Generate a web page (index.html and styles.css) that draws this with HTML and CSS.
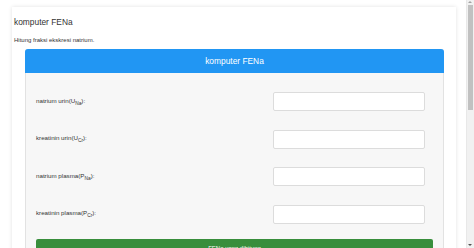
FILE: index.html
```html
<!DOCTYPE html>
<html lang="id">
<head>
    <meta charset="UTF-8">
    <meta name="viewport" content="width=device-width, initial-scale=1.0">
    <title>komputer FENa</title>
    <link rel="stylesheet" href="styles.css">
</head>
<body>
    <div class="container">
        <h1 class="page-title">komputer FENa</h1>
        <p class="intro">Hitung fraksi ekskresi natrium.</p>

        <div class="calc">
            <div class="calc-head">komputer FENa</div>
            <form class="calc-body" id="fenaForm">
                <div class="row">
                    <label for="una">natrium urin(U<sub>Na</sub>):</label>
                    <input type="number" id="una" name="una">
                </div>
                <div class="row">
                    <label for="ucr">kreatinin urin(U<sub>Cr</sub>):</label>
                    <input type="number" id="ucr" name="ucr">
                </div>
                <div class="row">
                    <label for="pna">natrium plasma(P<sub>Na</sub>):</label>
                    <input type="number" id="pna" name="pna">
                </div>
                <div class="row">
                    <label for="pcr">kreatinin plasma(P<sub>Cr</sub>):</label>
                    <input type="number" id="pcr" name="pcr">
                </div>
                <button type="submit">FENa yang dihitung</button>
                <div class="result" id="result"></div>
            </form>
        </div>
    </div>

    <!-- scrollbar look of the original window -->
    <div class="fake-scroll">
        <span class="arrow up"></span>
        <div class="thumb"></div>
        <span class="arrow down"></span>
    </div>

    <script>
        document.getElementById('fenaForm').addEventListener('submit', function(event) {
            event.preventDefault();
            var f = event.target;
            var una = parseFloat(f.una.value);
            var ucr = parseFloat(f.ucr.value);
            var pna = parseFloat(f.pna.value);
            var pcr = parseFloat(f.pcr.value);
            var out = document.getElementById('result');

            if (!una || !ucr || !pna || !pcr) {
                out.textContent = 'Silakan isi semua kolom.';
                return;
            }

            // FENa = (UNa x PCr) / (PNa x UCr) x 100
            var fena = (una * pcr) / (pna * ucr) * 100;
            out.textContent = 'FENa: ' + fena.toFixed(2) + '%';
        });
    </script>
</body>
</html>
```

FILE: styles.css
```css
body {
    font-family: "Liberation Sans", Arial, sans-serif;
    background: #fff;
    color: #333;
    margin: 0;
    padding: 7px 18px 40px 12px;
}
.container {
    background: #fff;
    box-shadow: 0 0 4px rgba(0,0,0,0.12);
    padding: 10px 12px 30px 2px;
}
.page-title {
    font-size: 8.4px;
    font-weight: normal;
    margin: 0;
    line-height: 10px;
}
.intro {
    font-size: 6px;
    margin: 9px 0 0;
    line-height: 8px;
}
.calc {
    margin: 5px 0 0 11px;
    border: 1px solid #e2e2e2;
    border-top: none;
    border-radius: 3px 3px 0 0;
    background: #f7f7f7;
}
.calc-head {
    background: #2196f3;
    color: #fff;
    font-size: 8.4px;
    text-align: center;
    height: 24px;
    line-height: 24px;
    border-radius: 3px 3px 0 0;
    margin: 0 -1px;
}
.calc-body {
    padding: 19px 10px 20px 10px;
    display: flex;
    flex-direction: column;
    gap: 18.5px;
}
.row {
    display: flex;
    justify-content: space-between;
    align-items: center;
    padding-right: 8px;
}
label {
    font-size: 6.2px;
}
label sub {
    font-size: 4.8px;
}
input {
    width: 152px;
    height: 19px;
    box-sizing: border-box;
    border: 1px solid #dcdcdc;
    border-radius: 2px;
    background: #fff;
    margin: 0;
}
button {
    margin-top: -3px;
    height: 18px;
    border: none;
    border-radius: 2px;
    background: #388e3c;
    color: #fff;
    font-family: inherit;
    font-size: 6px;
    cursor: pointer;
}
button:hover {
    background: #2e7d32;
}
.result {
    font-size: 6px;
    min-height: 40px;
}
.fake-scroll {
    position: fixed;
    top: 0;
    right: 0;
    width: 8px;
    height: 100%;
    background: #f1f1f1;
    border-left: 1px solid #e8e8e8;
    box-sizing: border-box;
}
.fake-scroll .thumb {
    position: absolute;
    top: 5px;
    left: 1px;
    width: 5px;
    height: 105px;
    background: #c1c1c1;
}
.fake-scroll .arrow {
    position: absolute;
    left: 1px;
    width: 0;
    height: 0;
    border-left: 2.5px solid transparent;
    border-right: 2.5px solid transparent;
}
.fake-scroll .up {
    top: 1px;
    border-bottom: 2.5px solid #a3a3a3;
}
.fake-scroll .down {
    bottom: 2px;
    border-top: 2.5px solid #505050;
}
```
